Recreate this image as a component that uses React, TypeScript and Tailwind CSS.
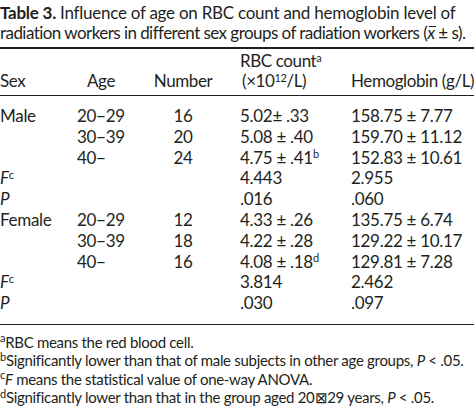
const font = { fontFamily: 'Lato, "Noto Sans", sans-serif' }

type Row = {
  sex?: React.ReactNode
  age?: string
  n?: string
  rbc: React.ReactNode
  hb: string
}

const Sup = ({ children }: { children: React.ReactNode }) => (
  <sup className="text-[11px]">{children}</sup>
)

const rows: Row[] = [
  { sex: 'Male', age: '20−29', n: '16', rbc: '5.02± .33', hb: '158.75 ± 7.77' },
  { age: '30−39', n: '20', rbc: '5.08 ± .40', hb: '159.70 ± 11.12' },
  { age: '40−', n: '24', rbc: <>4.75 ± .41<Sup>b</Sup></>, hb: '152.83 ± 10.61' },
  { sex: <><i>F</i><Sup>c</Sup></>, rbc: '4.443', hb: '2.955' },
  { sex: <i>P</i>, rbc: '.016', hb: '.060' },
  { sex: 'Female', age: '20−29', n: '12', rbc: '4.33 ± .26', hb: '135.75 ± 6.74' },
  { age: '30−39', n: '18', rbc: '4.22 ± .28', hb: '129.22 ± 10.17' },
  { age: '40−', n: '16', rbc: <>4.08 ± .18<Sup>d</Sup></>, hb: '129.81 ± 7.28' },
  { sex: <><i>F</i><Sup>c</Sup></>, rbc: '3.814', hb: '2.462' },
  { sex: <i>P</i>, rbc: '.030', hb: '.097' },
]

export default function App() {
  return (
    <div className="w-[474px] h-[412px] overflow-hidden bg-white text-[#231f20]" style={font}>
      {/* Caption */}
      <div className="pt-[3px] text-[17px] leading-[20px] whitespace-nowrap tracking-[-0.25px]">
        <p>
          <span className="font-bold">Table 3.</span> Influence of age on RBC count and hemoglobin level of
        </p>
        <p className="tracking-[-0.55px]">
          radiation workers in different sex groups of radiation workers (
          <span className="relative italic">
            x
            <span className="absolute left-[2px] right-[-1px] top-[4px] border-t border-[#231f20]" />
          </span>
          {' '}± s).
        </p>
      </div>

      <div className="mt-[4px] border-t-2 border-[#231f20]" />

      {/* Header */}
      <div className="grid grid-cols-[77px_75px_88px_111px_1fr] items-end pt-[2px] pb-[4px] text-[17px] leading-[20px] whitespace-nowrap tracking-[-0.4px]">
        <div>Sex</div>
        <div className="pl-[10px]">Age</div>
        <div className="w-[62px] flex justify-center">Number</div>
        <div className="flex flex-col">
          <span>RBC count<Sup>a</Sup></span>
          <span className="pl-[2px]">(×10<Sup>12</Sup>/L)</span>
        </div>
        <div>Hemoglobin (g/L)</div>
      </div>

      <div className="border-t border-[#231f20]" />

      {/* Body */}
      <div className="grid grid-cols-[77px_75px_88px_111px_1fr] py-[10px] text-[17px] leading-[20.8px] whitespace-nowrap tracking-[-0.3px]">
        {rows.map((r, i) => (
          <div key={i} className="contents">
            <div>{r.sex}</div>
            <div>{r.age}</div>
            <div className="w-[62px] text-center">{r.n}</div>
            <div>{r.rbc}</div>
            <div>{r.hb}</div>
          </div>
        ))}
      </div>

      <div className="border-t-[1.5px] border-[#231f20]" />

      {/* Footnotes */}
      <div className="pt-[8px] text-[15px] leading-[18.5px] whitespace-nowrap tracking-[-0.3px]">
        <p><Sup>a</Sup>RBC means the red blood cell.</p>
        <p><Sup>b</Sup>Significantly lower than that of male subjects in other age groups, <i>P</i> &lt; .05.</p>
        <p><Sup>c</Sup><i>F</i> means the statistical value of one-way ANOVA.</p>
        <p><Sup>d</Sup>Significantly lower than that in the group aged 20⊠29 years, <i>P</i> &lt; .05.</p>
      </div>
    </div>
  )
}
